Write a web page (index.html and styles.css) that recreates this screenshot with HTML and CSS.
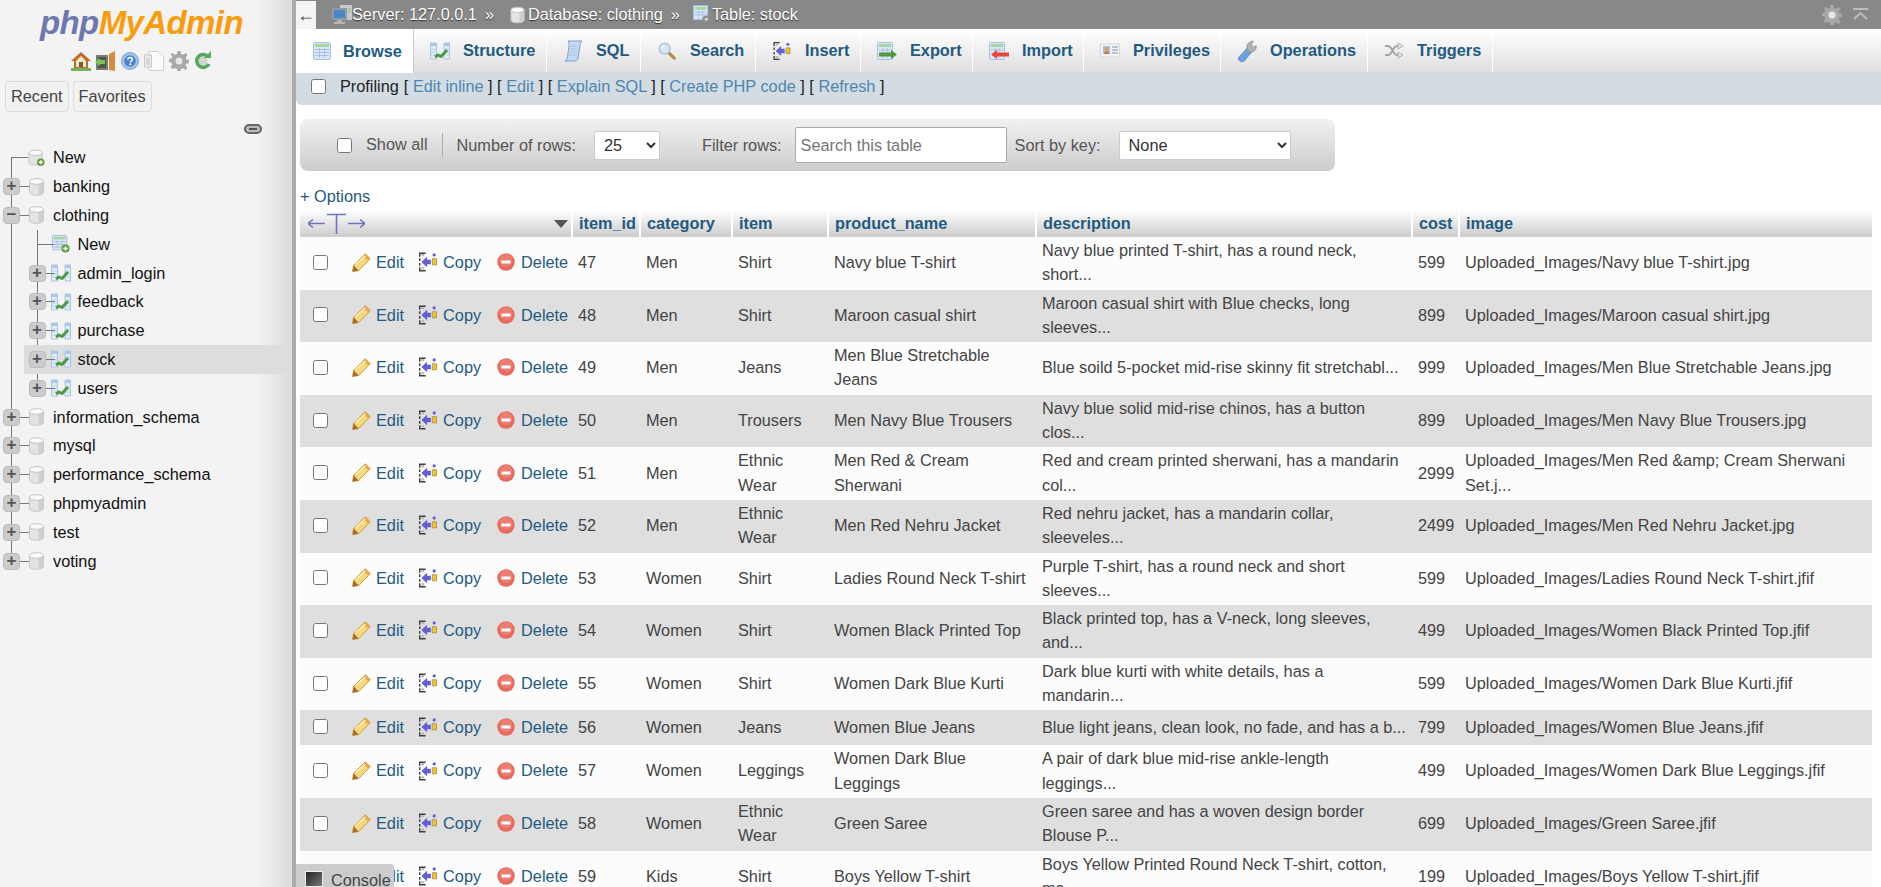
FILE: index.html
```html
<!DOCTYPE html>
<html>
  <head>
    <meta charset="utf-8">
    <title>127.0.0.1 / clothing / stock | phpMyAdmin</title>
    <link rel="stylesheet" href="styles.css">
  </head>
  <body>
    <svg class="sprite" xmlns="http://www.w3.org/2000/svg">
      <symbol id="i-db" viewBox="0 0 16 18">
        <path d="M1 3.500v11c0 1.600 3 2.800 7 2.800s7-1.200 7-2.800v-11z" fill="#e4e4e4" stroke="#c4c4c4"/>
        <path d="M10 6v10.800c2.800-.3 5-1.200 5-2.300V4z" fill="#cfcfcf"/>
        <ellipse cx="8" cy="3.500" rx="7" ry="2.800" fill="#fbfbfb" stroke="#c4c4c4"/>
      </symbol>
      <symbol id="i-dbnew" viewBox="0 0 18 18">
        <path d="M1 3.500v10c0 1.600 3 2.800 7 2.800s7-1.200 7-2.800v-10z" fill="#e4e4e4" stroke="#c4c4c4"/>
        <ellipse cx="8" cy="3.500" rx="7" ry="2.800" fill="#fbfbfb" stroke="#c4c4c4"/>
        <circle cx="13.500" cy="13.500" r="4" fill="#5fa03c"/>
        <path d="M11.300 13.500h4.400M13.500 11.300v4.400" stroke="#fff" stroke-width="1.400"/>
      </symbol>
      <symbol id="i-props" viewBox="0 0 20 18">
        <path d="M.5 1h6v16h-6zM14 1h5.500v16H14z" fill="#e4eef9" stroke="#a9c4e6"/>
        <path d="M1 1h5v3H1zM14.500 1H19v3h-4.500z" fill="#a9c9ec"/>
        <path d="M1 7h5M1 10h5M1 13h5M14.500 7H19M14.500 10H19M14.500 13H19" stroke="#bcd2ec"/>
        <path d="M5 15l3-2 3 1.500 6-6.500" fill="none" stroke="#4b9b45" stroke-width="3" stroke-linejoin="round"/>
      </symbol>
      <symbol id="i-grid" viewBox="0 0 18 18">
        <rect x=".5" y=".5" width="17" height="17" rx="1.500" fill="#dbe7f6" stroke="#a3bfe2"/>
        <path d="M2 2h14v3H2z" fill="#a8d6a0"/>
        <path d="M2 7.500h14M2 10.500h14M2 13.500h14M6.500 6v10M11.500 6v10" stroke="#a8c0df"/>
      </symbol>
      <symbol id="i-tablenew" viewBox="0 0 20 20">
        <rect x=".5" y=".5" width="16" height="16" rx="1.500" fill="#dbe7f6" stroke="#9dbae0"/>
        <path d="M2 2h13v3H2z" fill="#a8d6a0"/>
        <path d="M2 7.500h13M2 10.500h13M2 13.500h13M6 6v9M11 6v9" stroke="#a8c0df"/>
        <circle cx="15" cy="15" r="4.500" fill="#5fa03c"/>
        <path d="M12.500 15h5M15 12.500v5" stroke="#fff" stroke-width="1.400"/>
      </symbol>
      <symbol id="i-server" viewBox="0 0 20 20">
        <path d="M8 0h12v15H8z" fill="#c9c9c9"/>
        <path d="M0 3h15v12H0z" fill="#8f9aa6"/>
        <path d="M2 5h11v8H2z" fill="#4d86c6"/>
        <path d="M5 15h5v2h3v2H2v-2h3z" fill="#b5b5b5"/>
        <path d="M16 4h3M16 7h3" stroke="#7ec46f"/>
      </symbol>
      <symbol id="i-tableops" viewBox="0 0 20 20">
        <rect x=".5" y=".5" width="15" height="15" fill="#dbe7f6" stroke="#9dbae0"/>
        <path d="M2 2h12v3H2z" fill="#a8d6a0"/>
        <path d="M2 7.500h12M2 10.500h12M6 6v9M10 6v9" stroke="#a8c0df"/>
        <circle cx="14" cy="15" r="4" fill="#8c8c8c"/>
        <circle cx="14" cy="15" r="1.500" fill="#ddd"/>
      </symbol>
      <symbol id="i-sql" viewBox="0 0 20 22">
        <path d="M5 1h14c-2 1-2 3-2 5l-2 12c-.5 2.500-2 3-3.500 3H2c2-1 2.200-2 2.500-4L6 6C6.300 4 6 2 5 1z" fill="#c5d9f1" stroke="#7b9fd0"/>
        <path d="M8 6h7M7.500 9h7M7 12h7M6.500 15h7" stroke="#a9c3e4"/>
      </symbol>
      <symbol id="i-search" viewBox="0 0 20 20">
        <path d="M11 11l7 7" stroke="#c08a3e" stroke-width="3.500" stroke-linecap="round"/>
        <circle cx="7.500" cy="7.500" r="6" fill="#d4e6f7" stroke="#a5bfdb" stroke-width="1.500"/>
        <path d="M4 7a3.500 3.500 0 0 1 3-3" fill="none" stroke="#fff" stroke-width="1.500"/>
      </symbol>
      <symbol id="i-insert" viewBox="0 0 19 20">
        <path d="M0 0h7v1.500H1.500v3H0zM0 6h1.500v3H0zM0 11h1.500v3H0zM0 15.500h1.500v3H7V20H0z" fill="#3f3f3f"/>
        <path d="M2.500 1.500h3V4h-3zM2.500 15.500h3v2.500h-3z" fill="#bbb"/>
        <path d="M2.500 10l6-5.500v3h4v5h-4v3z" fill="#5f5fd8"/>
        <path d="M14 6.500h4.500V13H14z" fill="#f2c230" stroke="#8a7320" stroke-width=".6"/>
        <circle cx="16" cy="2.500" r="1.700" fill="#5f5fd8"/>
      </symbol>
      <symbol id="i-export" viewBox="0 0 20 18">
        <rect x=".5" y=".5" width="15" height="17" rx="1" fill="#dbe7f6" stroke="#a3bfe2"/>
        <path d="M2 2h12v3H2z" fill="#a8d6a0"/>
        <path d="M2 8h12M6 6v10M10 6v10" stroke="#a8c0df"/>
        <path d="M2 10.500h12V8l6 4.500-6 4.500v-2.500H2z" fill="#4f9c3c"/>
      </symbol>
      <symbol id="i-import" viewBox="0 0 20 18">
        <rect x=".5" y=".5" width="15" height="17" rx="1" fill="#dbe7f6" stroke="#a3bfe2"/>
        <path d="M2 2h12v3H2z" fill="#a8d6a0"/>
        <path d="M2 8h12M6 6v10M10 6v10" stroke="#a8c0df"/>
        <path d="M20 10.500H8V8l-6 4.500L8 17v-2.500h12z" fill="#e8483c"/>
      </symbol>
      <symbol id="i-priv" viewBox="0 0 20 18">
        <path d="M.5 2h19v13H.5z" fill="#f4f4f4" stroke="#d5d5d5"/>
        <path d="M2 15.500h16l1 2H1z" fill="#e8e8e8"/>
        <path d="M3 4h7v8H3z" fill="#9fc2e8"/>
        <circle cx="6.500" cy="7" r="2" fill="#e0a060"/>
        <path d="M4 12c0-2 1-3 2.500-3S9 10 9 12z" fill="#c97a3a"/>
        <path d="M12 5h6M12 8h6M12 11h6" stroke="#a7b4c4" stroke-width="1.300"/>
      </symbol>
      <symbol id="i-wrench" viewBox="0 0 22 26">
        <path d="M2 20L12 9l5 4-9 11c-2 2-8 0-6-4z" fill="#6f9fdc" stroke="#4f7fc0" stroke-width=".8"/>
        <path d="M11 11c-1-5 2-9 7-9l-2 4 2 3 3-2c1 4-2 8-7 7z" fill="#b0b0b0" stroke="#8c8c8c" stroke-width=".8"/>
      </symbol>
      <symbol id="i-triggers" viewBox="0 0 20 16">
        <path d="M1 3h3c4 0 5 9 9 9h2M1 12h3c4 0 5-9 9-9h2" fill="none" stroke="#a5a5a5" stroke-width="2"/>
        <path d="M14 0l5 3-5 3zM14 9l5 3-5 3z" fill="#e4e4e4" stroke="#a5a5a5" stroke-width=".8"/>
      </symbol>
      <symbol id="i-edit" viewBox="0 0 20 20">
        <path d="M14 .8l5.200 5.200L7 18.500.7 19.500 1.700 13z" fill="#f5d97a" stroke="#c9953a"/>
        <path d="M1.700 13L7 18.500.7 19.500z" fill="#a66b2e"/>
        <path d="M12 3l5.200 5.200 2-2.200L14 .8z" fill="#e9a84a"/>
        <path d="M4 12L14 3" stroke="#fbeeb8" stroke-width="1.500"/>
      </symbol>
      <symbol id="i-del" viewBox="0 0 18 18">
        <circle cx="9" cy="9" r="8.700" fill="#e66a5e"/>
        <circle cx="9" cy="7.500" r="6.500" fill="#ef8a7e" opacity=".6"/>
        <path d="M4.500 7.500h9v3h-9z" fill="#fff"/>
      </symbol>
      <symbol id="i-home" viewBox="0 0 20 20">
        <path d="M10 1L0 10h3v7h14v-7h3z" fill="#b96f2c"/>
        <path d="M5 10l5-5 5 5v6H5z" fill="#f6e6c8"/>
        <path d="M8 11h4v5H8z" fill="#7c5a34"/>
        <path d="M0 17h20v3H0z" fill="#6fb35a"/>
      </symbol>
      <symbol id="i-exit" viewBox="0 0 20 20">
        <path d="M1 4h12v15H1z" fill="#7c7c70"/>
        <path d="M3 6h8v11H3z" fill="#4f5650"/>
        <path d="M14 3l6-3v20l-6-1z" fill="#d88d3e"/>
        <path d="M0 11l5-4v2h5v4H5v2z" fill="#7cc35a"/>
      </symbol>
      <symbol id="i-help" viewBox="0 0 18 18">
        <circle cx="9" cy="9" r="8.500" fill="#9fc3ee" stroke="#7ea6da"/>
        <circle cx="9" cy="9" r="5.800" fill="#4f83cc"/>
        <path d="M6.800 7.500C7 6 8 5.500 9.200 5.500c1.300 0 2.200.8 2.200 1.900 0 1.500-2 1.500-2 3" fill="none" stroke="#fff" stroke-width="1.500"/>
        <circle cx="9.300" cy="12.300" r="1" fill="#fff"/>
      </symbol>
      <symbol id="i-docs" viewBox="0 0 20 20">
        <path d="M5 .5h9l5.500 5v14H5z" fill="#fbfbfb" stroke="#d0d0d0"/>
        <path d="M.5 4h7v12h-7z" fill="#eee" stroke="#c8c8c8"/>
        <path d="M3 7v7M5 7v7" stroke="#c0c0c0"/>
      </symbol>
      <symbol id="i-gear" viewBox="0 0 20 20">
        <path d="M8.500 0h3l.5 3 2 .8L16.500 2l2 2-1.800 2.500.8 2 2.500.5v3l-2.500.5-.8 2 1.800 2.500-2 2-2.500-1.800-2 .8-.5 2.500h-3l-.5-2.500-2-.8L3.500 18l-2-2 1.800-2.500-.8-2L0 11V8l2.500-.5.8-2L1.500 3l2-1L6 3.800l2-.8z" fill="#a9a9a9"/>
        <circle cx="10" cy="10" r="3.500" fill="#e8e8e8"/>
      </symbol>
      <symbol id="i-reload" viewBox="0 0 16 20">
        <circle cx="7.500" cy="10" r="5" fill="#cfd8cf"/>
        <path d="M13.500 6A6.500 6.500 0 1 0 14 13" fill="none" stroke="#55a860" stroke-width="3.500"/>
        <path d="M9 7h7V0z" fill="#55a860"/>
      </symbol>
      <symbol id="i-link" viewBox="0 0 18 10">
        <rect x="1" y="1" width="16" height="8" rx="4" fill="#bbb" stroke="#666" stroke-width="2"/>
        <path d="M5 5h8" stroke="#555" stroke-width="2"/>
      </symbol>
    </svg>

    <aside class="sidebar">
      <div class="logo"><span class="logo-php">php</span><span class="logo-my">MyAdmin</span></div>
      <div class="quick">
        <svg class="q-home"><use href="#i-home"/></svg>
        <svg class="q-exit"><use href="#i-exit"/></svg>
        <svg class="q-help"><use href="#i-help"/></svg>
        <svg class="q-docs"><use href="#i-docs"/></svg>
        <svg class="q-gear"><use href="#i-gear"/></svg>
        <svg class="q-reload"><use href="#i-reload"/></svg>
      </div>
      <div class="side-tabs">
        <a class="side-btn">Recent</a>
        <a class="side-btn">Favorites</a>
      </div>
      <div class="link-row"><svg class="i-link"><use href="#i-link"/></svg></div>

      <ul class="tree">
        <li>
          <div class="row"><span class="leaf"></span><svg class="i-db"><use href="#i-dbnew"/></svg><a>New</a></div>
        </li>
        <li>
          <div class="row"><span class="toggle">+</span><svg class="i-db"><use href="#i-db"/></svg><a>banking</a></div>
        </li>
        <li>
          <div class="row"><span class="toggle">&minus;</span><svg class="i-db"><use href="#i-db"/></svg><a>clothing</a></div>
          <ul>
            <li><div class="row"><span class="leaf"></span><svg class="i-tb"><use href="#i-tablenew"/></svg><a>New</a></div></li>
            <li><div class="row"><span class="toggle">+</span><svg class="i-tb"><use href="#i-props"/></svg><a>admin_login</a></div></li>
            <li><div class="row"><span class="toggle">+</span><svg class="i-tb"><use href="#i-props"/></svg><a>feedback</a></div></li>
            <li><div class="row"><span class="toggle">+</span><svg class="i-tb"><use href="#i-props"/></svg><a>purchase</a></div></li>
            <li><div class="row selected"><span class="toggle">+</span><svg class="i-tb"><use href="#i-props"/></svg><a>stock</a></div></li>
            <li><div class="row"><span class="toggle">+</span><svg class="i-tb"><use href="#i-props"/></svg><a>users</a></div></li>
          </ul>
        </li>
        <li>
          <div class="row"><span class="toggle">+</span><svg class="i-db"><use href="#i-db"/></svg><a>information_schema</a></div>
        </li>
        <li>
          <div class="row"><span class="toggle">+</span><svg class="i-db"><use href="#i-db"/></svg><a>mysql</a></div>
        </li>
        <li>
          <div class="row"><span class="toggle">+</span><svg class="i-db"><use href="#i-db"/></svg><a>performance_schema</a></div>
        </li>
        <li>
          <div class="row"><span class="toggle">+</span><svg class="i-db"><use href="#i-db"/></svg><a>phpmyadmin</a></div>
        </li>
        <li>
          <div class="row"><span class="toggle">+</span><svg class="i-db"><use href="#i-db"/></svg><a>test</a></div>
        </li>
        <li>
          <div class="row"><span class="toggle">+</span><svg class="i-db"><use href="#i-db"/></svg><a>voting</a></div>
        </li>
      </ul>
    </aside>

    <main class="content">
      <div class="topbar">
        <span class="back">&larr;</span>
        <div class="crumbs">
          <svg class="c-server"><use href="#i-server"/></svg><span>Server: 127.0.0.1</span>
          <span class="sep">&raquo;</span>
          <svg class="c-db"><use href="#i-db"/></svg><span>Database: clothing</span>
          <span class="sep">&raquo;</span>
          <svg class="c-table"><use href="#i-tableops"/></svg><span>Table: stock</span>
        </div>
        <div class="top-right">
          <svg class="c-gear"><use href="#i-gear"/></svg>
          <svg class="c-up" viewBox="0 0 15 13"><path d="M0 1h15M1 11l6.500-6 6.500 6" fill="none" stroke="#bdbdbd" stroke-width="2"/></svg>
        </div>
      </div>

      <nav class="tabs">
        <a class="tab active tab-browse"><svg><use href="#i-grid"/></svg>Browse</a>
        <a class="tab tab-structure"><svg><use href="#i-props"/></svg>Structure</a>
        <a class="tab tab-sql"><svg><use href="#i-sql"/></svg>SQL</a>
        <a class="tab tab-search"><svg><use href="#i-search"/></svg>Search</a>
        <a class="tab tab-insert"><svg><use href="#i-insert"/></svg>Insert</a>
        <a class="tab tab-export"><svg><use href="#i-export"/></svg>Export</a>
        <a class="tab tab-import"><svg><use href="#i-import"/></svg>Import</a>
        <a class="tab tab-priv"><svg><use href="#i-priv"/></svg>Privileges</a>
        <a class="tab tab-ops"><svg><use href="#i-wrench"/></svg>Operations</a>
        <a class="tab tab-trig"><svg><use href="#i-triggers"/></svg>Triggers</a>
      </nav>

      <div class="profiling">
        <input type="checkbox" class="check">
        <span class="prof-label">Profiling</span>
        <span>[ <a>Edit inline</a> ] [ <a>Edit</a> ] [ <a>Explain SQL</a> ] [ <a>Create PHP code</a> ] [ <a>Refresh</a> ]</span>
      </div>

      <form class="filter">
        <input type="checkbox" class="check">
        <label class="show-all">Show all</label>
        <span class="divider"></span>
        <label class="num-label">Number of rows:</label>
        <select class="sel-rows"><option>25</option></select>
        <label class="filter-label">Filter rows:</label>
        <input type="text" class="search-box" placeholder="Search this table">
        <label class="sort-label">Sort by key:</label>
        <select class="sel-sort"><option>None</option></select>
      </form>

      <a class="options">+ Options</a>

      <table class="data">
        <colgroup>
          <col class="c1"><col class="c2"><col class="c3"><col class="c4"><col class="c5"><col class="c6"><col class="c7"><col class="c8">
        </colgroup>
        <thead>
          <tr>
            <th class="th-act">
              <div class="th-inner">
                <svg class="resize" viewBox="0 0 57 22"><path d="M0 10.500h17M5 6.500L0 10.500l5 4M40 10.500h17M52 6.500l5 4-5 4M19 1.500h19M28.500 1.500V21" fill="none" stroke="#6b74c0" stroke-width="1.600"/></svg>
                <svg class="sort-arrow" viewBox="0 0 14 8"><path d="M0 0h14L7 8z" fill="#555"/></svg>
              </div>
            </th>
            <th>item_id</th><th>category</th><th>item</th><th>product_name</th><th>description</th><th>cost</th><th>image</th>
          </tr>
        </thead>
        <tbody>
          <tr>
            <td class="act"><div class="acts"><input type="checkbox" class="check"><a class="edit"><svg><use href="#i-edit"/></svg>Edit</a><a class="copy"><svg><use href="#i-insert"/></svg>Copy</a><a class="del"><svg><use href="#i-del"/></svg>Delete</a></div></td>
            <td>47</td><td>Men</td><td>Shirt</td><td>Navy blue T-shirt</td><td>Navy blue printed T-shirt, has a round neck, short...</td><td>599</td><td>Uploaded_Images/Navy blue T-shirt.jpg</td>
          </tr>
          <tr>
            <td class="act"><div class="acts"><input type="checkbox" class="check"><a class="edit"><svg><use href="#i-edit"/></svg>Edit</a><a class="copy"><svg><use href="#i-insert"/></svg>Copy</a><a class="del"><svg><use href="#i-del"/></svg>Delete</a></div></td>
            <td>48</td><td>Men</td><td>Shirt</td><td>Maroon casual shirt</td><td>Maroon casual shirt with Blue checks, long sleeves...</td><td>899</td><td>Uploaded_Images/Maroon casual shirt.jpg</td>
          </tr>
          <tr>
            <td class="act"><div class="acts"><input type="checkbox" class="check"><a class="edit"><svg><use href="#i-edit"/></svg>Edit</a><a class="copy"><svg><use href="#i-insert"/></svg>Copy</a><a class="del"><svg><use href="#i-del"/></svg>Delete</a></div></td>
            <td>49</td><td>Men</td><td>Jeans</td><td>Men Blue Stretchable Jeans</td><td>Blue soild 5-pocket mid-rise skinny fit stretchabl...</td><td>999</td><td>Uploaded_Images/Men Blue Stretchable Jeans.jpg</td>
          </tr>
          <tr>
            <td class="act"><div class="acts"><input type="checkbox" class="check"><a class="edit"><svg><use href="#i-edit"/></svg>Edit</a><a class="copy"><svg><use href="#i-insert"/></svg>Copy</a><a class="del"><svg><use href="#i-del"/></svg>Delete</a></div></td>
            <td>50</td><td>Men</td><td>Trousers</td><td>Men Navy Blue Trousers</td><td>Navy blue solid mid-rise chinos, has a button clos...</td><td>899</td><td>Uploaded_Images/Men Navy Blue Trousers.jpg</td>
          </tr>
          <tr>
            <td class="act"><div class="acts"><input type="checkbox" class="check"><a class="edit"><svg><use href="#i-edit"/></svg>Edit</a><a class="copy"><svg><use href="#i-insert"/></svg>Copy</a><a class="del"><svg><use href="#i-del"/></svg>Delete</a></div></td>
            <td>51</td><td>Men</td><td>Ethnic Wear</td><td>Men Red &amp; Cream Sherwani</td><td>Red and cream printed sherwani, has a mandarin col...</td><td>2999</td><td>Uploaded_Images/Men Red &amp;amp; Cream Sherwani Set.j...</td>
          </tr>
          <tr>
            <td class="act"><div class="acts"><input type="checkbox" class="check"><a class="edit"><svg><use href="#i-edit"/></svg>Edit</a><a class="copy"><svg><use href="#i-insert"/></svg>Copy</a><a class="del"><svg><use href="#i-del"/></svg>Delete</a></div></td>
            <td>52</td><td>Men</td><td>Ethnic Wear</td><td>Men Red Nehru Jacket</td><td>Red nehru jacket, has a mandarin collar, sleeveles...</td><td>2499</td><td>Uploaded_Images/Men Red Nehru Jacket.jpg</td>
          </tr>
          <tr>
            <td class="act"><div class="acts"><input type="checkbox" class="check"><a class="edit"><svg><use href="#i-edit"/></svg>Edit</a><a class="copy"><svg><use href="#i-insert"/></svg>Copy</a><a class="del"><svg><use href="#i-del"/></svg>Delete</a></div></td>
            <td>53</td><td>Women</td><td>Shirt</td><td>Ladies Round Neck T-shirt</td><td>Purple T-shirt, has a round neck and short sleeves...</td><td>599</td><td>Uploaded_Images/Ladies Round Neck T-shirt.jfif</td>
          </tr>
          <tr>
            <td class="act"><div class="acts"><input type="checkbox" class="check"><a class="edit"><svg><use href="#i-edit"/></svg>Edit</a><a class="copy"><svg><use href="#i-insert"/></svg>Copy</a><a class="del"><svg><use href="#i-del"/></svg>Delete</a></div></td>
            <td>54</td><td>Women</td><td>Shirt</td><td>Women Black Printed Top</td><td>Black printed top, has a V-neck, long sleeves, and...</td><td>499</td><td>Uploaded_Images/Women Black Printed Top.jfif</td>
          </tr>
          <tr>
            <td class="act"><div class="acts"><input type="checkbox" class="check"><a class="edit"><svg><use href="#i-edit"/></svg>Edit</a><a class="copy"><svg><use href="#i-insert"/></svg>Copy</a><a class="del"><svg><use href="#i-del"/></svg>Delete</a></div></td>
            <td>55</td><td>Women</td><td>Shirt</td><td>Women Dark Blue Kurti</td><td>Dark blue kurti with white details, has a mandarin...</td><td>599</td><td>Uploaded_Images/Women Dark Blue Kurti.jfif</td>
          </tr>
          <tr>
            <td class="act"><div class="acts"><input type="checkbox" class="check"><a class="edit"><svg><use href="#i-edit"/></svg>Edit</a><a class="copy"><svg><use href="#i-insert"/></svg>Copy</a><a class="del"><svg><use href="#i-del"/></svg>Delete</a></div></td>
            <td>56</td><td>Women</td><td>Jeans</td><td>Women Blue Jeans</td><td>Blue light jeans, clean look, no fade, and has a b...</td><td>799</td><td>Uploaded_Images/Women Blue Jeans.jfif</td>
          </tr>
          <tr>
            <td class="act"><div class="acts"><input type="checkbox" class="check"><a class="edit"><svg><use href="#i-edit"/></svg>Edit</a><a class="copy"><svg><use href="#i-insert"/></svg>Copy</a><a class="del"><svg><use href="#i-del"/></svg>Delete</a></div></td>
            <td>57</td><td>Women</td><td>Leggings</td><td>Women Dark Blue Leggings</td><td>A pair of dark blue mid-rise ankle-length<br>leggings...</td><td>499</td><td>Uploaded_Images/Women Dark Blue Leggings.jfif</td>
          </tr>
          <tr>
            <td class="act"><div class="acts"><input type="checkbox" class="check"><a class="edit"><svg><use href="#i-edit"/></svg>Edit</a><a class="copy"><svg><use href="#i-insert"/></svg>Copy</a><a class="del"><svg><use href="#i-del"/></svg>Delete</a></div></td>
            <td>58</td><td>Women</td><td>Ethnic Wear</td><td>Green Saree</td><td>Green saree and has a woven design border Blouse P...</td><td>699</td><td>Uploaded_Images/Green Saree.jfif</td>
          </tr>
          <tr>
            <td class="act"><div class="acts"><input type="checkbox" class="check"><a class="edit"><svg><use href="#i-edit"/></svg>Edit</a><a class="copy"><svg><use href="#i-insert"/></svg>Copy</a><a class="del"><svg><use href="#i-del"/></svg>Delete</a></div></td>
            <td>59</td><td>Kids</td><td>Shirt</td><td>Boys Yellow T-shirt</td><td>Boys Yellow Printed Round Neck T-shirt, cotton, ma...</td><td>199</td><td>Uploaded_Images/Boys Yellow T-shirt.jfif</td>
          </tr>
        </tbody>
      </table>

      <div class="console"><span class="console-icon"></span><span class="console-text">Console</span></div>
    </main>
  </body>
</html>
```

FILE: styles.css
```css
html, body {
  margin: 0;
  height: 100%;
  overflow: hidden;
}
body {
  display: flex;
  font-family: "Liberation Sans", Arial, sans-serif;
  font-size: 16.3px;
  color: #444;
  background: #fff;
}
.sprite { position: absolute; width: 0; height: 0; }
a { color: #235a81; text-decoration: none; }
.check { width: 15px; height: 15px; margin: 0; flex: none; }

/* sidebar */
.sidebar {
  width: 292px;
  flex: none;
  border-right: 4px solid #aaa;
  background: linear-gradient(to right, #f3f3f3 88%, #dadbdd 100%);
  color: #111;
}
.logo {
  height: 51px;
  padding-top: 1px;
  box-sizing: border-box;
  margin-right: 9px;
  text-align: center;
  font-size: 33px;
  line-height: 44px;
  font-weight: bold;
  font-style: italic;
  letter-spacing: -.6px;
}
.logo-php { color: #6c78af; }
.logo-my { color: #f89c0e; }
.quick {
  height: 20px;
  display: flex;
  align-items: center;
  padding-left: 71px;
}
.quick svg { height: 20px; }
.q-home { width: 20px; margin-right: 4px; }
.q-exit { width: 20px; margin-right: 6px; }
.q-help { width: 18px; margin-right: 5px; }
.q-docs { width: 20px; margin-right: 5px; }
.q-gear { width: 20px; margin-right: 6px; }
.q-reload { width: 16px; }
.side-tabs {
  display: flex;
  gap: 4px;
  padding: 10px 0 0 5px;
}
.side-btn {
  padding: 0 5px;
  height: 29px;
  line-height: 29px;
  border: 1px solid #ddd;
  border-radius: 4px;
  color: #444;
  background: #f2f2f2;
}
.link-row {
  height: 31.5px;
  padding: 12px 30px 0 0;
  box-sizing: border-box;
  display: flex;
  justify-content: flex-end;
}
.i-link { width: 18px; height: 10px; }

/* navigation tree */
.tree, .tree ul {
  list-style: none;
  margin: 0;
  padding: 0;
}
.tree { margin-right: 4px; }
.tree ul { padding-left: 25.5px; }
.tree li { position: relative; }
.tree li::before {
  content: "";
  position: absolute;
  left: 11px;
  top: 0;
  bottom: 0;
  border-left: 1px solid #777;
}
.tree > li:first-child::before { top: 14px; }
.tree li:last-child::before { bottom: auto; height: 14px; }
.row {
  position: relative;
  height: 28.8px;
  display: flex;
  align-items: center;
  white-space: nowrap;
}
.row a { color: #111; }
.row.selected {
  background: #ddd;
  margin-left: -1.5px;
  padding-left: 1.5px;
}
.toggle, .leaf {
  position: relative;
  width: 17px;
  height: 17px;
  margin-left: 3px;
  flex: none;
  box-sizing: border-box;
}
.toggle {
  background: #ccc;
  border: 1px solid #bbb;
  border-radius: 4px;
  color: #555;
  font-size: 17px;
  font-weight: bold;
  line-height: 14px;
  text-align: center;
}
.toggle::after, .leaf::after {
  content: "";
  position: absolute;
  left: 16px;
  top: 7px;
  width: 9px;
  border-top: 1px solid #777;
}
.leaf::after { left: 8px; top: 8px; width: 17px; }
.i-db { width: 17px; height: 18px; margin: 0 8px 0 8px; flex: none; }
.i-tb { width: 20px; height: 18px; margin: 0 7px 0 5px; flex: none; }

/* top of the content column */
.content {
  position: relative;
  flex: 1;
  min-width: 0;
}
.topbar {
  height: 29px;
  background: #888;
  display: flex;
  align-items: center;
  color: #fff;
  text-shadow: 0 1px 1px #333;
}
.back {
  width: 20px;
  height: 28px;
  background: #f4f4f4;
  color: #444;
  font-size: 18px;
  line-height: 28px;
  text-align: center;
  text-shadow: none;
}
.crumbs {
  display: flex;
  align-items: center;
  padding-left: 16px;
  flex: 1;
}
.crumbs .sep { margin: 0 16px 0 8px; }
.c-server { width: 20px; height: 20px; }
.c-db { width: 15px; height: 18px; margin-right: 3px; }
.c-table { width: 19px; height: 19px; margin-left: -3px; }
.top-right {
  display: flex;
  align-items: center;
  gap: 11px;
  padding-right: 13px;
}
.c-gear { width: 20px; height: 20px; }
.c-up { width: 15px; height: 13px; }

.tabs {
  height: 44px;
  display: flex;
  background: linear-gradient(#fff, #dfdfdf);
  border-bottom: 1px solid #d8d8d8;
  box-sizing: border-box;
}
.tab {
  display: flex;
  align-items: center;
  box-sizing: border-box;
  padding-left: 16px;
  font-weight: bold;
  border-right: 1px solid #fff;
}
.tab svg { width: 20px; height: 18px; margin-right: 13px; flex: none; }
.tab.active { background: #fff; border-right-color: #ccc; height: 44px; }
.tab-browse { width: 118px; }
.tab-browse svg { margin-right: 11px; }
.tab-structure { width: 133px; }
.tab-sql { width: 94px; }
.tab-search { width: 115px; }
.tab-insert { width: 105px; }
.tab-export { width: 112px; }
.tab-import { width: 111px; }
.tab-priv { width: 137px; }
.tab-ops { width: 147px; }
.tab-trig { width: 125px; }
.tab-sql svg { height: 22px; }
.tab-ops svg { height: 24px; }

.profiling {
  height: 32px;
  padding: 0 0 5px 15px;
  box-sizing: border-box;
  display: flex;
  align-items: center;
  background: #d3dce3;
  border-radius: 0 0 0 6px;
  color: #222;
}
.prof-label { margin: 0 5px 0 14px; }
.profiling a { color: #4f86b0; }

.filter {
  display: flex;
  align-items: center;
  margin: 14px 0 0 4px;
  width: 1035px;
  height: 52px;
  box-sizing: border-box;
  padding-left: 37px;
  background: linear-gradient(#f1f1f1, #cccccc);
  border-radius: 8px;
  color: #555;
}
.show-all { margin: 0 14px 2px; }
.divider { width: 1px; height: 24px; background: #9fb0b8; margin-right: 14px; }
.sel-rows, .sel-sort {
  height: 29px;
  border: 1px solid #ccc;
  border-radius: 2px;
  background: #fff;
  color: #333;
  font-family: inherit;
  font-size: 16.3px;
  padding-left: 5px;
}
.sel-rows { width: 66px; margin-left: 18px; }
.filter-label { margin-left: 42px; }
.search-box {
  width: 212px;
  height: 36px;
  box-sizing: border-box;
  margin-left: 13px;
  padding: 0 5px;
  border: 1px solid #aaa;
  border-radius: 2px;
  font-family: inherit;
  font-size: 16.3px;
}
.sort-label { margin-left: 8px; }
.sel-sort { width: 172px; margin-left: 18px; }

.options {
  display: block;
  margin: 14px 0 0 4px;
  height: 25px;
  line-height: 22px;
}

/* results table */
.data {
  margin-left: 4px;
  width: 1572px;
  table-layout: fixed;
  border-collapse: separate;
  border-spacing: 0;
}
.c1 { width: 273px; }
.c2 { width: 68px; }
.c3 { width: 92px; }
.c4 { width: 96px; }
.c5 { width: 208px; }
.c6 { width: 376px; }
.c7 { width: 47px; }
.c8 { width: 412px; }
.data th {
  height: 27px;
  padding: 0 5px 0 6px;
  text-align: left;
  color: #235a81;
  background: linear-gradient(#fff, #ccc);
  border-right: 2px solid #fff;
}
.data th:last-child { border-right: 0; }
.th-inner {
  display: flex;
  align-items: center;
  justify-content: space-between;
  padding: 0 0 0 2px;
}
.resize { width: 57px; height: 22px; }
.sort-arrow { width: 14px; height: 8px; margin-right: -2px; }
.data td {
  padding: 1px 5px 3px;
  line-height: 24.3px;
  vertical-align: middle;
  background: #fcfcfc;
}
.data tbody tr:nth-child(even) td { background: #dfdfdf; }
.data td.act { height: 35px; box-sizing: border-box; padding: 0 0 2px 13px; }
.acts {
  display: flex;
  align-items: center;
}
.acts a { display: flex; align-items: center; }
.acts svg { height: 19px; margin-right: 5px; flex: none; }
.edit { margin-left: 24px; }
.edit svg { width: 19px; }
.copy { margin-left: 15px; }
.copy svg { width: 18px; height: 20px; margin-right: 6px; }
.del { margin-left: 16px; }
.del svg { width: 18px; height: 18px; margin-right: 6px; }

.console {
  position: absolute;
  left: 0;
  bottom: 0;
  width: 98px;
  height: 23px;
  box-sizing: border-box;
  padding-left: 9px;
  display: flex;
  align-items: center;
  gap: 8px;
  background: #ccc;
  border-radius: 0 4px 0 0;
  color: #444;
}
.console-text { margin-top: 9px; }
.console-icon {
  width: 16px;
  height: 14px;
  margin-top: 6px;
  border: 1px solid #eee;
  background: linear-gradient(135deg, #222, #777);
}
```
